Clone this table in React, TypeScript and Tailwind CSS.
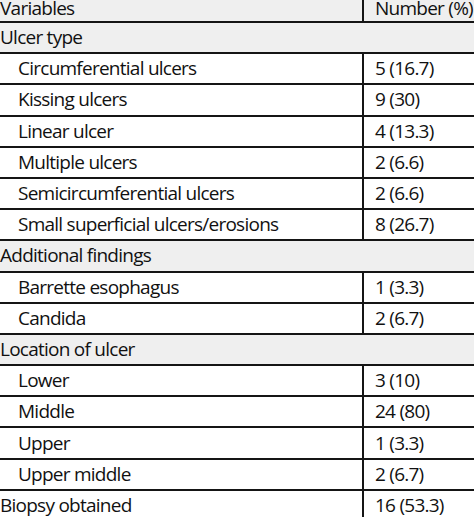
type Row =
  | { kind: "section"; label: string }
  | { kind: "item"; label: string; value: string; indent?: boolean };

const rows: Row[] = [
  { kind: "section", label: "Ulcer type" },
  { kind: "item", label: "Circumferential ulcers", value: "5 (16.7)", indent: true },
  { kind: "item", label: "Kissing ulcers", value: "9 (30)", indent: true },
  { kind: "item", label: "Linear ulcer", value: "4 (13.3)", indent: true },
  { kind: "item", label: "Multiple ulcers", value: "2 (6.6)", indent: true },
  { kind: "item", label: "Semicircumferential ulcers", value: "2 (6.6)", indent: true },
  { kind: "item", label: "Small superficial ulcers/erosions", value: "8 (26.7)", indent: true },
  { kind: "section", label: "Additional findings" },
  { kind: "item", label: "Barrette esophagus", value: "1 (3.3)", indent: true },
  { kind: "item", label: "Candida", value: "2 (6.7)", indent: true },
  { kind: "section", label: "Location of ulcer" },
  { kind: "item", label: "Lower", value: "3 (10)", indent: true },
  { kind: "item", label: "Middle", value: "24 (80)", indent: true },
  { kind: "item", label: "Upper", value: "1 (3.3)", indent: true },
  { kind: "item", label: "Upper middle", value: "2 (6.7)", indent: true },
  { kind: "item", label: "Biopsy obtained", value: "16 (53.3)" },
];

export default function App() {
  return (
    <div
      className="w-[474px] h-[517px] overflow-hidden bg-white text-[19px] tracking-[-0.75px] text-[#111]"
      style={{ fontFamily: '"Open Sans", "Noto Sans", sans-serif' }}
    >
      {/* Header */}
      <div className="grid grid-cols-[362px_1fr] h-[23px] border-b-2 border-[#151515] bg-[#efefef]">
        <div className="leading-[19px] -mt-[1px]">Variables</div>
        <div className="border-l-2 border-[#151515] pl-[11px] leading-[19px] whitespace-nowrap">
          <span className="block -mt-[1px]">Number (%)</span>
        </div>
      </div>

      {rows.map((row, i) =>
        row.kind === "section" ? (
          <div
            key={i}
            className="flex h-[31.2px] items-center border-b-2 border-[#151515] bg-[#efefef]"
          >
            <span className="leading-[29px]">{row.label}</span>
          </div>
        ) : (
          <div
            key={i}
            className="grid grid-cols-[362px_1fr] h-[31.2px] border-b-2 border-[#151515] bg-white"
          >
            <div className={`flex items-center leading-[29px] ${row.indent ? "pl-[18px]" : ""}`}>
              {row.label}
            </div>
            <div className="flex items-center border-l-2 border-[#151515] pl-[11px] leading-[29px]">
              {row.value}
            </div>
          </div>
        )
      )}
    </div>
  );
}
